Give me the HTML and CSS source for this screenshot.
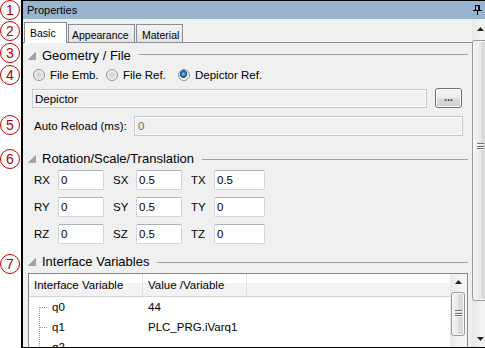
FILE: index.html
```html
<!DOCTYPE html>
<html>
<head>
<meta charset="utf-8">
<link rel="stylesheet" href="styles.css">
</head>
<body>
<div class="screen">
  <div class="callouts">
    <span class="callout k1">1</span>
    <span class="callout k2">2</span>
    <span class="callout k3">3</span>
    <span class="callout k4">4</span>
    <span class="callout k5">5</span>
    <span class="callout k6">6</span>
    <span class="callout k7">7</span>
  </div>
  <div class="window">
    <div class="titlebar">
      <span class="title">Properties</span>
      <svg class="pin" viewBox="0 0 9 10" width="9" height="10"><rect x="2.5" y="0.5" width="3" height="5" fill="none" stroke="#000"/><rect x="5" y="0" width="2" height="6" fill="#000"/><rect x="0" y="5" width="9" height="1" fill="#000"/><rect x="4" y="6" width="1" height="4" fill="#000"/></svg>
    </div>
    <div class="main">
      <div class="tabctl">
        <div class="tabs">
          <div class="tab active t-basic">Basic</div>
          <div class="tab t-app">Appearance</div>
          <div class="tab t-mat">Material</div>
        </div>
        <div class="panel">
          <div class="section h1">
            <svg class="tri" viewBox="0 0 8 8" width="8" height="8"><polygon points="7.5,0.5 7.5,7.5 0.5,7.5" fill="#a2a2a2" stroke="#8d8d8d" stroke-width="0.6"/></svg>
            <span class="stitle">Geometry / File</span>
            <span class="rule"></span>
          </div>
          <div class="radios">
            <div class="ritem ri1"><span class="radio"></span><span>File Emb.</span></div>
            <div class="ritem ri2"><span class="radio"></span><span>File Ref.</span></div>
            <div class="ritem"><span class="radio on"></span><span>Depictor Ref.</span></div>
          </div>
          <div class="pathrow">
            <div class="field ro">Depictor</div>
            <div class="btn">...</div>
          </div>
          <div class="reloadrow">
            <span class="lbl">Auto Reload (ms):</span>
            <div class="field ro dim">0</div>
          </div>
          <div class="section h2">
            <svg class="tri" viewBox="0 0 8 8" width="8" height="8"><polygon points="7.5,0.5 7.5,7.5 0.5,7.5" fill="#a2a2a2" stroke="#8d8d8d" stroke-width="0.6"/></svg>
            <span class="stitle">Rotation/Scale/Translation</span>
            <span class="rule"></span>
          </div>
          <div class="grid">
            <div class="grow">
              <span class="glbl">RX</span><div class="gin">0</div>
              <span class="glbl mid">SX</span><div class="gin">0.5</div>
              <span class="glbl mid">TX</span><div class="gin wide">0.5</div>
            </div>
            <div class="grow">
              <span class="glbl">RY</span><div class="gin">0</div>
              <span class="glbl mid">SY</span><div class="gin">0.5</div>
              <span class="glbl mid">TY</span><div class="gin wide">0</div>
            </div>
            <div class="grow">
              <span class="glbl">RZ</span><div class="gin">0</div>
              <span class="glbl mid">SZ</span><div class="gin">0.5</div>
              <span class="glbl mid">TZ</span><div class="gin wide">0</div>
            </div>
          </div>
          <div class="section h3">
            <svg class="tri" viewBox="0 0 8 8" width="8" height="8"><polygon points="7.5,0.5 7.5,7.5 0.5,7.5" fill="#a2a2a2" stroke="#8d8d8d" stroke-width="0.6"/></svg>
            <span class="stitle">Interface Variables</span>
            <span class="rule"></span>
          </div>
          <div class="table">
            <div class="list">
              <div class="thead">
                <div class="th c1">Interface Variable</div>
                <div class="th c2">Value /Variable</div>
                <div class="th c3"></div>
              </div>
              <div class="tr">
                <div class="td c1"><svg viewBox="0 0 13 20" width="13" height="20"><line x1="0.5" y1="10" x2="0.5" y2="20" stroke="#9a9a9a" stroke-dasharray="1 1"/><line x1="1" y1="10.5" x2="9" y2="10.5" stroke="#9a9a9a" stroke-dasharray="1 1"/></svg>q0</div>
                <div class="td c2">44</div>
              </div>
              <div class="tr">
                <div class="td c1"><svg viewBox="0 0 13 20" width="13" height="20"><line x1="0.5" y1="0" x2="0.5" y2="20" stroke="#9a9a9a" stroke-dasharray="1 1"/><line x1="1" y1="10.5" x2="9" y2="10.5" stroke="#9a9a9a" stroke-dasharray="1 1"/></svg>q1</div>
                <div class="td c2">PLC_PRG.iVarq1</div>
              </div>
              <div class="tr">
                <div class="td c1"><svg viewBox="0 0 13 20" width="13" height="20"><line x1="0.5" y1="0" x2="0.5" y2="20" stroke="#9a9a9a" stroke-dasharray="1 1"/><line x1="1" y1="10.5" x2="9" y2="10.5" stroke="#9a9a9a" stroke-dasharray="1 1"/></svg>q2</div>
                <div class="td c2"></div>
              </div>
            </div>
            <div class="vscroll inner">
              <div class="sbtn up-in"><svg viewBox="0 0 7 4" width="7" height="4"><polygon points="0,4 3.5,0 7,4" fill="#222"/></svg></div>
              <div class="thumb thumb-in"><span class="grip"></span></div>
            </div>
          </div>
        </div>
      </div>
      <div class="vscroll outer">
        <div class="sbtn up-out"><svg viewBox="0 0 7 4" width="7" height="4"><polygon points="0,4 3.5,0 7,4" fill="#222"/></svg></div>
        <div class="thumb thumb-out"><span class="grip"></span></div>
        <div class="spacer"></div>
        <div class="sbtn down-out"><svg viewBox="0 0 7 4" width="7" height="4"><polygon points="0,0 3.5,4 7,0" fill="#222"/></svg></div>
      </div>
    </div>
  </div>
</div>
</body>
</html>
```

FILE: styles.css
```css
* { box-sizing: border-box; }
html, body { margin: 0; padding: 0; background: #fff; overflow: hidden; }
body {
  font-family: "Liberation Sans", Arial, sans-serif;
  font-size: 11.5px;
  color: #000;
}
.screen {
  display: flex;
  width: 485px;
  height: 348px;
  overflow: hidden;
}

/* callout annotations */
.callouts { position: relative; width: 21px; flex: none; }
.callout {
  position: absolute;
  left: 0;
  width: 20px;
  height: 20px;
  border: 1.8px solid #c80000;
  border-radius: 50%;
  background: #fff;
  color: #a80000;
  font-size: 14px;
  line-height: 1;
  display: flex;
  align-items: center;
  justify-content: center;
}
.k1 { top: 0; }
.k2 { top: 21px; }
.k3 { top: 43px; }
.k4 { top: 65px; }
.k5 { top: 115px; }
.k6 { top: 149px; }
.k7 { top: 254px; }

/* window */
.window {
  flex: none;
  width: 468px;
  display: flex;
  flex-direction: column;
  border-left: 2px solid #000;
  border-top: 1px solid #000;
  border-bottom: 1px solid #000;
  background: #f0f0f0;
}
.titlebar {
  height: 18px;
  flex: none;
  background: #99b4d1;
  display: flex;
  align-items: center;
  padding-left: 4px;
  font-size: 11px;
}
.title { flex: 1; }
.pin { margin-right: 7px; flex: none; }

.main { flex: 1; display: flex; min-height: 0; overflow: hidden; }
.tabctl { flex: none; width: 449px; display: flex; flex-direction: column; }

.tabs {
  height: 23px;
  flex: none;
  display: flex;
  align-items: flex-end;
  padding-left: 1px;
}
.tab {
  height: 18px;
  border: 1px solid #898c95;
  border-bottom: none;
  background: linear-gradient(#f3f3f3, #e3e3e3);
  font-size: 10.5px;
  display: flex;
  align-items: center;
  padding-top: 2px;
}
.tab.active {
  height: 21px;
  margin-bottom: -1px;
  background: #fff;
  position: relative;
  z-index: 1;
  padding-top: 0;
}
.t-basic { width: 43px; padding-left: 5px; }
.t-app { width: 67px; padding-left: 3px; margin-left: 1px; }
.t-mat { width: 47px; padding-left: 5px; margin-left: 1px; }

.panel {
  flex: 1;
  min-height: 0;
  overflow: hidden;
  border-top: 1px solid #8c8e94;
  padding: 0 4px 0 5px;
  display: flex;
  flex-direction: column;
}

.section { display: flex; align-items: flex-start; height: 15px; flex: none; }
.section .tri { flex: none; margin-top: 4px; }
.stitle { font-size: 13px; line-height: 15px; margin-left: 6px; white-space: nowrap; }
.rule { flex: 1; height: 1px; background: #a0a0a0; margin: 6px 0 0 8px; }
.h1 { margin-top: 5px; }
.h2 { margin-top: 15px; }
.h2 .rule, .h3 .rule { margin-top: 8px; }
.h3 { margin-top: 10px; }

.radios {
  display: flex;
  align-items: center;
  height: 14px;
  margin-top: 5px;
  padding-left: 5px;
  flex: none;
}
.ritem { display: flex; align-items: center; white-space: nowrap; }
.ri1 { width: 73px; }
.ri2 { width: 72px; }
.radio {
  width: 12px;
  height: 12px;
  flex: none;
  border-radius: 50%;
  border: 1px solid #8e8f8f;
  background: radial-gradient(circle at 50% 50%, #cfcfcf 0, #dcdcdc 2.5px, #ececec 4px, #f7f7f7 5.5px);
  margin-right: 5px;
}
.radio.on {
  background: radial-gradient(circle at 45% 40%, #a8dbf9 0, #3d8dd0 1.5px, #1c5f99 3px, #174a78 3.6px, #e6e6e6 4px, #f7f7f7 5.5px);
}

.pathrow {
  display: flex;
  height: 21px;
  margin-top: 6px;
  padding-left: 4px;
  padding-right: 6px;
  flex: none;
}
.field {
  height: 20px;
  border: 1px solid #c6c7ca;
  display: flex;
  align-items: center;
  padding-left: 2px;
}
.field.ro { background: #f0f0f0; box-shadow: inset 0 0 0 1px #fbfbfb; }
.pathrow .field { flex: 1; margin-top: 1px; height: 19px; }
.btn {
  width: 27px;
  height: 20px;
  margin-left: 8px;
  border: 1px solid #707070;
  border-radius: 3px;
  background: linear-gradient(#f3f3f3 0, #ebebeb 50%, #dddddd 50%, #cfcfcf 100%);
  box-shadow: inset 0 0 0 1px #fcfcfc;
  display: flex;
  align-items: center;
  justify-content: center;
  font-size: 11px;
  font-weight: bold;
  color: #333;
  padding-bottom: 2px;
}

.reloadrow {
  display: flex;
  align-items: center;
  height: 20px;
  margin-top: 7px;
  padding-right: 5px;
  flex: none;
}
.reloadrow .lbl { width: 106px; padding-left: 6px; flex: none; white-space: nowrap; }
.reloadrow .field { flex: 1; padding-left: 3px; }
.field.dim { color: #6d6d6d; }

.grid { display: flex; flex-direction: column; gap: 7px; margin-top: 4px; flex: none; }
.grow { display: flex; align-items: center; height: 20px; padding-left: 6px; }
.glbl { width: 24px; flex: none; }
.glbl.mid { margin-left: 9px; width: 23px; }
.gin {
  width: 46px;
  height: 20px;
  flex: none;
  background: #fff;
  border: 1px solid #d2d4d9;
  border-top-color: #adb0b6;
  border-radius: 2px;
  padding-left: 2px;
  display: flex;
  align-items: center;
}
.gin.wide { width: 51px; }

.table {
  margin-top: 4px;
  height: 100px;
  flex: none;
  display: flex;
  border: 1px solid #828790;
  background: #fff;
}
.list { flex: 1; min-width: 0; }
.thead {
  display: flex;
  height: 23px;
  border-bottom: 1px solid #d5d5d5;
  background: linear-gradient(#fff 0, #fff 40%, #f4f4f5 40%, #f2f2f3 100%);
}
.th {
  display: flex;
  align-items: center;
  padding-left: 5px;
  border-right: 1px solid #e2e3e5;
  white-space: nowrap;
}
.th.c1 { width: 114px; }
.th.c2 { width: 104px; }
.th.c3 { flex: 1; border-right: none; }
.tr { display: flex; height: 20px; align-items: center; }
.td { white-space: nowrap; }
.td.c1 { width: 114px; display: flex; align-items: center; height: 20px; padding-left: 10px; }
.td.c1 svg { flex: none; }
.td.c2 { padding-left: 5px; }

.vscroll { display: flex; flex-direction: column; flex: none; }
.vscroll.inner {
  width: 17px;
  background: linear-gradient(to right, #e8e8e8, #f4f4f4 60%, #f6f6f6);
}
.vscroll.outer {
  width: 17px;
  background: linear-gradient(to right, #e6e6e6, #f2f2f2 50%, #f5f5f5);
}
.sbtn { display: flex; align-items: center; justify-content: center; flex: none; }
.up-in { height: 16px; padding-right: 1px; }
.up-out { height: 20px; padding-top: 0; }
.down-out { height: 17px; }
.spacer { flex: 1; }
.thumb {
  border: 1px solid #979797;
  border-radius: 3px;
  background: linear-gradient(to right, #f4f4f4, #e9e9e9 50%, #dcdcdc 51%, #d6d6d6);
  box-shadow: inset 0 0 0 1px #fafafa;
  display: flex;
  flex-direction: column;
  align-items: center;
  flex: none;
}
.thumb-in { width: 14px; height: 44px; margin: 2px 0 0 1px; justify-content: center; }
.thumb-out { width: 17px; height: 261px; margin-top: 1px; }
.thumb-out .grip { margin-top: 102px; }
.grip {
  width: 7px;
  height: 8px;
  background: repeating-linear-gradient(#6f6f6f 0, #6f6f6f 1px, #f6f6f6 1px, #f6f6f6 2px, transparent 2px, transparent 2.66px);
}
```
